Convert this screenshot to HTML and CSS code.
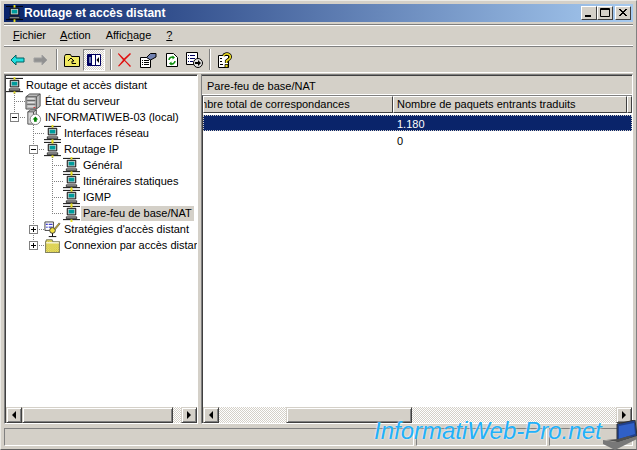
FILE: index.html
```html
<!DOCTYPE html>
<html>
<head>
    <title>Routage et accès distant</title>
    <link rel="stylesheet" href="styles.css">
</head>
<body>
    <svg class="defs" width="0" height="0">
        <defs>
            <pattern id="dither" width="2" height="2" patternUnits="userSpaceOnUse">
                <path d="M0 0h2v2H0z" fill="#f4f080"/>
                <path d="M0 0h1v1H0zM1 1h1v1H1z" fill="#c8b830"/>
            </pattern>
        </defs>
        <symbol id="rras" viewBox="0 0 18 18">
            <path d="M0 1.500h18M0 15.500h18" stroke="#000" fill="none"/>
            <path d="M8 0h2v3H8zM8 15h2v3H8z" fill="#e8e020"/>
            <path d="M4.500 3.500h9v7h-9z" fill="#d0d0d0" stroke="#000"/>
            <path d="M6 5h6v4H6z" fill="#009c9c"/>
            <path d="M3.500 12.500h11v2h-11z" fill="#a0a0a0" stroke="#000" stroke-width=".7"/>
        </symbol>
        <symbol id="server" viewBox="0 0 18 18">
            <path d="M1 4l4-3h11v13l-4 3H1z" fill="#b8b8b8" stroke="#505050"/>
            <path d="M1 4h11v13M12 4l4-3" fill="none" stroke="#505050"/>
            <path d="M2 8h9M2 12h9" stroke="#606060"/>
            <path d="M3 6h7M3 10h7M3 14h7" stroke="#e8e8e8"/>
            <path d="M9 15h2v1H9z" fill="#d02020"/>
        </symbol>
        <symbol id="machine" viewBox="0 0 18 18">
            <path d="M3 3l3-2h6v12l-3 3H3z" fill="#d8d8d8" stroke="#505050"/>
            <path d="M3 3h6v13M9 3l3-2" fill="none" stroke="#505050"/>
            <circle cx="11" cy="11" r="5.500" fill="#fff" stroke="#808080"/>
            <path d="M11 8l3 3h-1.600v2.500h-2.800V11H8z" fill="#008000"/>
        </symbol>
        <symbol id="policy" viewBox="0 0 18 18">
            <path d="M1 1h9v9H1z" fill="#fff" stroke="#404040"/>
            <path d="M2 3h2v1H2zM2 6h2v1H2z" fill="#0000c0"/>
            <path d="M5 3.500h4M5 6.500h4" stroke="#0000c0"/>
            <circle cx="9" cy="10" r="3" fill="#f0e040" stroke="#404040"/>
            <path d="M11 8l5-6 1 1-5 6z" fill="#e0c020" stroke="#404040" stroke-width=".7"/>
            <path d="M9 13v3M5 16.500h8" stroke="#000"/>
        </symbol>
        <symbol id="folder" viewBox="0 0 16 16">
            <path d="M1.500 4.500l1-2h5l1 2h6v10h-13z" fill="url(#dither)" stroke="#808060"/>
            <path d="M2 5.500h12" stroke="#fff"/>
        </symbol>
    </svg>

    <div class="window">
        <div class="titlebar">
            <svg class="title-icon"><use href="#rras"/></svg>
            <span class="title-text">Routage et accès distant</span>
            <div class="caption-buttons">
                <button class="caption"><svg width="10" height="10"><path d="M1 7h6v2H1z"/></svg></button>
                <button class="caption"><svg width="11" height="10"><path d="M.5.5h9v8h-9zM.5 1.500h9" fill="none" stroke="#000"/></svg></button>
                <button class="caption caption-close"><svg width="10" height="10"><path d="M1 1l7 7M2 1l7 7M8 1L1 8M9 1L2 8" stroke="#000" fill="none"/></svg></button>
            </div>
        </div>

        <div class="menubar">
            <span class="menu"><u>F</u>ichier</span>
            <span class="menu"><u>A</u>ction</span>
            <span class="menu">Affic<u>h</u>age</span>
            <span class="menu"><u>?</u></span>
        </div>

        <div class="toolbar">
            <svg class="tool tool-first" width="15" height="12"><path d="M1 6l5-5v3h8v4H6v3z" fill="#20e0e0" stroke="#006060"/></svg>
            <svg class="tool tool-next" width="15" height="12"><path d="M14 6L9 1v3H1v4h8v3z" fill="#909090" stroke="#a0a0a0"/></svg>
            <span class="tool-sep sep-a"></span>
            <svg class="tool tool-up" width="16" height="16"><path d="M.5 4.500l1-2h5l1 2h8v10H.5z" fill="#f0e860" stroke="#000"/><path d="M4 9l3-3 3 3H8v2.500h4" fill="none" stroke="#000"/></svg>
            <span class="tool-toggle"><svg width="14" height="12"><path d="M.5.5h13v11H.5z" fill="#fff" stroke="#000060"/><path d="M1 1h4v10H1zM8 1h1v10H8z" fill="#000060"/><path d="M12 3L9.500 6l2.500 3z" fill="#000"/><path d="M2 3h2v6H2z" fill="#7080b0"/></svg></span>
            <span class="tool-sep sep-b"></span>
            <svg class="tool tool-del" width="15" height="15"><path d="M1.500 1L7 6.500 13 1l1 1-6 6 6 6-1 1-5.500-6L2 14.500 1 14l5-6L1 2z" fill="#e01010"/></svg>
            <svg class="tool tool-prop" width="17" height="16"><path d="M.5 5.500h10v10H.5z" fill="#fff" stroke="#000"/><path d="M2 8.500h1M4 8.500h5M2 10.500h1M4 10.500h5M2 12.500h1M4 12.500h5" stroke="#000"/><path d="M6.500 5.500l4-4h5.500v3.500l-5.500 3z" fill="#7080b0" stroke="#000"/></svg>
            <svg class="tool tool-ref" width="14" height="16"><path d="M1.500 1.500h7l4 4v9h-11z" fill="#fff" stroke="#000"/><path d="M4 8a3 3 0 0 1 4.500-2.500" fill="none" stroke="#109010" stroke-width="1.500"/><path d="M7.500 3.500l2.500 2-2.500 2z" fill="#109010"/><path d="M10 9a3 3 0 0 1-4.500 2.500" fill="none" stroke="#109010" stroke-width="1.500"/><path d="M6.500 13.500L4 11.500l2.500-2z" fill="#109010"/></svg>
            <svg class="tool tool-exp" width="17" height="16"><path d="M.5.5h11v12H.5z" fill="#fff" stroke="#000"/><path d="M2 3.500h1M4 3.500h5M2 6.500h1M4 6.500h5M2 9.500h1M4 9.500h3" stroke="#000060"/><circle cx="12" cy="11" r="4.500" fill="#e0e0e0" stroke="#000"/><path d="M9 10h3V8l3 3-3 3v-2H9z" fill="#000"/></svg>
            <span class="tool-sep sep-c"></span>
            <svg class="tool tool-help" width="15" height="16"><path d="M.5 3.500h10v12H.5z" fill="#fff" stroke="#000"/><path d="M2 6.500h2M2 9.500h2M2 12.500h3" stroke="#000"/><path d="M5.500 4a3.500 3 0 1 1 5 3.500L8.500 9v2" fill="none" stroke="#000" stroke-width="3.200"/><path d="M5.500 4a3.500 3 0 1 1 5 3.500L8.500 9v2" fill="none" stroke="#e8d820" stroke-width="1.700"/><path d="M7 12.500h3v3H7z" fill="#e8d820" stroke="#000" stroke-width=".8"/></svg>
        </div>

        <div class="panes">
            <div class="pane tree-pane">
                <div class="tree">
                    <div class="row">
                        <svg class="icon"><use href="#rras"/></svg>
                        <span class="label">Routage et accès distant</span>
                    </div>
                    <div class="row">
                        <span class="joint"></span>
                        <svg class="icon"><use href="#server"/></svg>
                        <span class="label">État du serveur</span>
                    </div>
                    <div class="row">
                        <span class="joint joint-last"><span class="expander"><i class="minus"></i></span></span>
                        <svg class="icon"><use href="#machine"/></svg>
                        <span class="label">INFORMATIWEB-03 (local)</span>
                    </div>
                    <div class="row">
                        <span class="guide"></span>
                        <span class="joint"></span>
                        <svg class="icon"><use href="#rras"/></svg>
                        <span class="label">Interfaces réseau</span>
                    </div>
                    <div class="row">
                        <span class="guide"></span>
                        <span class="joint"><span class="expander"><i class="minus"></i></span></span>
                        <svg class="icon"><use href="#rras"/></svg>
                        <span class="label">Routage IP</span>
                    </div>
                    <div class="row">
                        <span class="guide"></span>
                        <span class="guide guide-line"></span>
                        <span class="joint"></span>
                        <svg class="icon"><use href="#rras"/></svg>
                        <span class="label">Général</span>
                    </div>
                    <div class="row">
                        <span class="guide"></span>
                        <span class="guide guide-line"></span>
                        <span class="joint"></span>
                        <svg class="icon"><use href="#rras"/></svg>
                        <span class="label">Itinéraires statiques</span>
                    </div>
                    <div class="row">
                        <span class="guide"></span>
                        <span class="guide guide-line"></span>
                        <span class="joint"></span>
                        <svg class="icon"><use href="#rras"/></svg>
                        <span class="label">IGMP</span>
                    </div>
                    <div class="row">
                        <span class="guide"></span>
                        <span class="guide guide-line"></span>
                        <span class="joint joint-last"></span>
                        <svg class="icon"><use href="#rras"/></svg>
                        <span class="label label-selected">Pare-feu de base/NAT</span>
                    </div>
                    <div class="row">
                        <span class="guide"></span>
                        <span class="joint"><span class="expander"><i class="plus"></i></span></span>
                        <svg class="icon"><use href="#policy"/></svg>
                        <span class="label">Stratégies d'accès distant</span>
                    </div>
                    <div class="row">
                        <span class="guide"></span>
                        <span class="joint joint-last"><span class="expander"><i class="plus"></i></span></span>
                        <svg class="icon"><use href="#folder"/></svg>
                        <span class="label">Connexion par accès distant</span>
                    </div>
                </div>
                <div class="scrollbar">
                    <span class="sb-btn"><i class="arrow-left"></i></span>
                    <span class="sb-thumb sb-thumb-left"></span>
                    <span class="sb-track"></span>
                    <span class="sb-btn"><i class="arrow-right"></i></span>
                </div>
            </div>

            <div class="pane list-pane">
                <div class="list-title">Pare-feu de base/NAT</div>
                <div class="list-view">
                    <div class="list-head">
                        <span class="col col-a"><span class="col-a-text">Nombre total de correspondances</span></span>
                        <span class="col col-b">Nombre de paquets entrants traduits</span>
                        <span class="col col-c"></span>
                    </div>
                    <div class="list-row list-row-selected"><span class="cell">1.180</span></div>
                    <div class="list-row"><span class="cell">0</span></div>
                </div>
                <div class="scrollbar list-scrollbar">
                    <span class="sb-btn"><i class="arrow-left"></i></span>
                    <span class="sb-track sb-track-a"></span>
                    <span class="sb-thumb sb-thumb-right"></span>
                    <span class="sb-track"></span>
                    <span class="sb-btn"><i class="arrow-right"></i></span>
                </div>
            </div>
        </div>

        <div class="statusbar">
            <span class="status status-a"></span>
            <span class="status status-b"></span>
            <span class="status status-c"></span>
        </div>
    </div>

    <div class="watermark">InformatiWeb-Pro.net</div>
    <svg class="laptop" width="34" height="30" viewBox="0 0 34 30">
        <path d="M14 4l18-4 2 16-20 6z" fill="#20408c" stroke="#303030"/>
        <path d="M16 6l15-3 1 11-16 5z" fill="#3060c8"/>
        <path d="M0 20l14 2 20-6v3L12 30 0 24z" fill="#787878"/>
        <path d="M3 20l12 2 14-5-3-1-11 3z" fill="#505050"/>
    </svg>
</body>
</html>
```

FILE: styles.css
```css
body {
    margin: 0;
    width: 637px;
    height: 450px;
    overflow: hidden;
    position: relative;
    font-family: "Liberation Sans", Arial, sans-serif;
    font-size: 11px;
    color: #000;
    background: #d4d0c8;
}
.defs { display: block; height: 0; }
svg { display: block; flex: none; }

/* Window frame */
.window {
    box-sizing: border-box;
    width: 637px;
    height: 450px;
    padding: 3px 3px 3px 3px;
    display: flex;
    flex-direction: column;
    border: 1px solid #ecebe6;
    border-right-color: #808080;
    border-bottom-color: #606060;
}

/* Title bar */
.titlebar {
    height: 18px;
    flex: none;
    display: flex;
    align-items: center;
    padding-left: 2px;
    background: linear-gradient(to right, #0a246a, #a6caf0);
}
.title-icon { width: 17px; height: 17px; }
.title-text {
    margin-left: 1px;
    color: #fff;
    font-weight: bold;
    font-size: 12px;
}
.caption-buttons { margin-left: auto; margin-right: 2px; display: flex; }
.caption {
    width: 16px;
    height: 14px;
    padding: 0;
    margin: 0;
    display: flex;
    align-items: center;
    justify-content: center;
    background: #d4d0c8;
    border: 1px solid;
    border-color: #fff #404040 #404040 #fff;
}
.caption-close { margin-left: 2px; }

/* Menu */
.menubar {
    height: 22px;
    margin-top: 2px;
    flex: none;
    display: flex;
    align-items: center;
    box-sizing: border-box;
    border-top: 1px solid #808080;
    border-bottom: 1px solid #fff;
    box-shadow: inset 0 1px 0 #fff, 0 1px 0 #808080;
}
.menu { padding-left: 9px; }
.menu:nth-child(2) { margin-left: 5px; }
.menu:nth-child(3) { margin-left: 6px; }
.menu:nth-child(4) { margin-left: 6px; }

/* Toolbar */
.toolbar {
    height: 26px;
    margin-top: 1px;
    flex: none;
    display: flex;
    align-items: center;
    border-bottom: 1px solid #fff;
    box-sizing: border-box;
}
.tool-first { margin-left: 6px; }
.tool-next { margin-left: 8px; }
.tool-sep {
    width: 0;
    height: 21px;
    border-left: 1px solid #808080;
    border-right: 1px solid #fff;
}
.sep-a { margin-left: 8px; }
.tool-up { margin-left: 6px; }
.tool-toggle {
    box-sizing: border-box;
    width: 22px;
    height: 22px;
    margin-left: 3px;
    display: flex;
    align-items: center;
    justify-content: center;
    border: 1px solid;
    border-color: #808080 #fff #fff #808080;
    background: repeating-conic-gradient(#fff 0 25%, #d4d0c8 0 50%) 0 0 / 2px 2px;
}
.sep-b { margin-left: 5px; }
.tool-del { margin-left: 5px; }
.tool-prop { margin-left: 8px; }
.tool-ref { margin-left: 8px; }
.tool-exp { margin-left: 7px; }
.sep-c { margin-left: 6px; }
.tool-help { margin-left: 7px; }

/* Panes */
.panes {
    flex: 1;
    display: flex;
    gap: 3px;
    margin-top: 1px;
    min-height: 0;
}
.pane {
    display: flex;
    flex-direction: column;
    box-sizing: border-box;
    border: 1px solid;
    border-color: #808080 #fff #fff #808080;
    box-shadow: inset 1px 1px 0 #404040;
}
.tree-pane { width: 194px; padding: 1px 0 0 1px; }
.list-pane { flex: 1; padding: 1px 0 0 0; min-width: 0; }

/* Tree */
.tree {
    flex: 1;
    background: #fff;
    padding: 1px 0 0 0;
    overflow: hidden;
    min-height: 0;
}
.row {
    height: 16px;
    display: flex;
    align-items: center;
    white-space: nowrap;
}
.icon { width: 17px; height: 17px; }
.label { margin-left: 1px; padding: 1px 2px; line-height: 13px; }
.label-selected { background: #d4d0c8; }
.guide { width: 19px; height: 16px; flex: none; }
.guide-line {
    background: repeating-linear-gradient(to bottom, #808080 0 1px, transparent 1px 2px) 8px 0 / 1px 100% no-repeat;
}
.joint {
    width: 19px;
    height: 16px;
    flex: none;
    box-sizing: border-box;
    padding: 4px 0 0 4px;
    background:
        repeating-linear-gradient(to bottom, #808080 0 1px, transparent 1px 2px) 8px 0 / 1px 100% no-repeat,
        repeating-linear-gradient(to right, #808080 0 1px, transparent 1px 2px) 8px 8px / 11px 1px no-repeat;
}
.joint-last {
    background:
        repeating-linear-gradient(to bottom, #808080 0 1px, transparent 1px 2px) 8px 0 / 1px 9px no-repeat,
        repeating-linear-gradient(to right, #808080 0 1px, transparent 1px 2px) 8px 8px / 11px 1px no-repeat;
}
.expander {
    display: block;
    box-sizing: border-box;
    width: 9px;
    height: 9px;
    padding: 1px;
    border: 1px solid #808080;
    background: #fff;
}
.minus, .plus { display: block; width: 5px; height: 5px; }
.minus { background: linear-gradient(#000, #000) 0 2px / 5px 1px no-repeat; }
.plus {
    background:
        linear-gradient(#000, #000) 0 2px / 5px 1px no-repeat,
        linear-gradient(#000, #000) 2px 0 / 1px 5px no-repeat;
}

/* List */
.list-title {
    height: 18px;
    flex: none;
    line-height: 20px;
    padding-left: 5px;
    background: #d4d0c8;
    border-bottom: 1px solid #fff;
}
.list-view {
    flex: 1;
    background: #fff;
    overflow: hidden;
    min-height: 0;
    border-top: 1px solid #808080;
    border-left: 1px solid #404040;
}
.list-head {
    height: 17px;
    display: flex;
    background: #d4d0c8;
    margin-bottom: 2px;
}
.col {
    box-sizing: border-box;
    border: 1px solid;
    border-color: #fff #404040 #404040 #fff;
    line-height: 15px;
    white-space: nowrap;
    overflow: hidden;
}
.col-a { width: 190px; }
.col-a-text { display: block; margin-left: -20px; }
.col-b { width: 234px; padding-left: 3px; }
.col-c { flex: 1; }
.list-row {
    height: 16px;
    margin-bottom: 1px;
    line-height: 18px;
    outline-offset: -1px;
}
.list-row-selected {
    color: #fff;
    background: #0a246a;
    outline: 1px dotted #d4d0c8;
}
.cell { display: block; margin-left: 194px; }

/* Scrollbars */
.scrollbar {
    height: 16px;
    flex: none;
    display: flex;
}
.list-scrollbar { padding-left: 1px; }
.sb-btn {
    box-sizing: border-box;
    width: 16px;
    height: 16px;
    flex: none;
    display: flex;
    align-items: center;
    justify-content: center;
    background: #d4d0c8;
    border: 1px solid;
    border-color: #d4d0c8 #404040 #404040 #d4d0c8;
    box-shadow: inset 1px 1px 0 #fff, inset -1px -1px 0 #808080;
}
.arrow-left, .arrow-right { width: 0; height: 0; border: 4px solid transparent; }
.arrow-left { border-right-color: #000; border-left-width: 0; }
.arrow-right { border-left-color: #000; border-right-width: 0; }
.sb-track {
    flex: 1;
    background: repeating-conic-gradient(#fff 0 25%, #d4d0c8 0 50%) 0 0 / 2px 2px;
}
.sb-track-a { flex: none; width: 67px; }
.sb-thumb {
    box-sizing: border-box;
    flex: none;
    height: 16px;
    background: #d4d0c8;
    border: 1px solid;
    border-color: #d4d0c8 #404040 #404040 #d4d0c8;
    box-shadow: inset 1px 1px 0 #fff, inset -1px -1px 0 #808080;
}
.sb-thumb-left { width: 151px; }
.sb-thumb-right { width: 126px; }

/* Status bar */
.statusbar {
    height: 18px;
    flex: none;
    display: flex;
    gap: 2px;
    margin-top: 4px;
}
.status {
    box-sizing: border-box;
    border: 1px solid;
    border-color: #808080 #fff #fff #808080;
}
.status-a { width: 410px; }
.status-b { width: 131px; }
.status-c { flex: 1; }

/* Site watermark, sits over the window */
.watermark {
    position: absolute;
    left: 374px;
    top: 417px;
    font-size: 24px;
    font-style: italic;
    color: #22b0f8;
    text-shadow: 0 0 2px #fff;
    white-space: nowrap;
}
.laptop {
    position: absolute;
    left: 603px;
    top: 420px;
}
```
